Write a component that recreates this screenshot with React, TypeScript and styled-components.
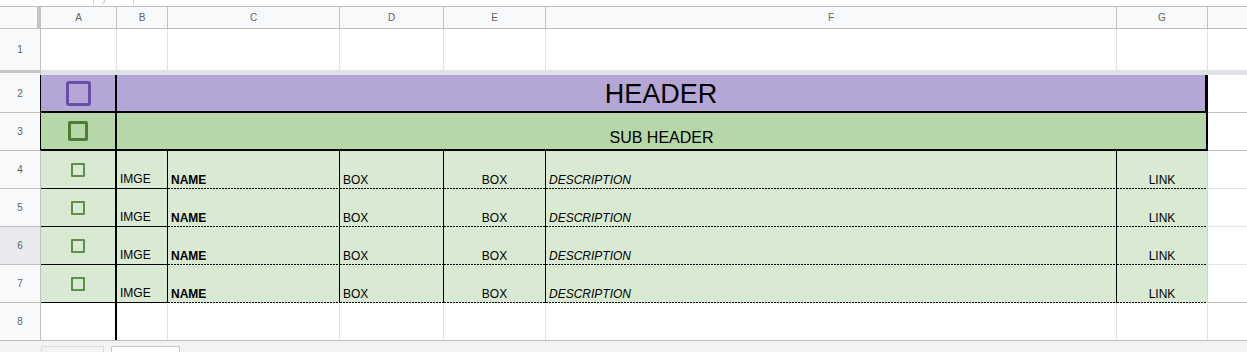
import React from 'react';
import styled, { createGlobalStyle } from 'styled-components';

const GlobalStyle = createGlobalStyle`
  html, body { margin: 0; padding: 0; background: #ffffff; }
  body { font-family: "Liberation Sans", Arial, sans-serif; }
  * { box-sizing: border-box; }
`;

const GRID = '#e2e2e2';
const HEAD_LINE = '#c0c0c0';
const PURPLE = '#b4a7d6';
const GREEN = '#b6d7a8';
const LIGHT_GREEN = '#d9ead3';

const Page = styled.div`
  width: 1247px;
  height: 352px;
  overflow: hidden;
  display: flex;
  flex-direction: column;
  background: #ffffff;
`;

const TopStrip = styled.div`
  height: 6px;
  flex: none;
  display: flex;
  align-items: flex-start;
  padding-left: 93px;
`;

const StripDivider = styled.span<{ $gap?: number }>`
  width: 1px;
  height: 5px;
  background: #d3d5d8;
  margin-left: ${(p) => p.$gap ?? 0}px;
`;

const FxStub = styled.svg`
  margin-left: 8px;
  width: 8px;
  height: 5px;
  flex: none;
`;

const Sheet = styled.div`
  flex: none;
  display: grid;
  grid-template-columns: 41px 76px 51px 172px 104px 102px 571px 91px 1fr;
  grid-template-rows: 23px 41px 5px repeat(6, 38px) 37px;
`;

const ColHead = styled.div<{ $handle?: boolean; $last?: boolean }>`
  background: #f8f9fa;
  border-top: 1px solid ${HEAD_LINE};
  border-bottom: 1px solid ${HEAD_LINE};
  border-right: ${(p) =>
    p.$handle ? '4px solid #c4c4c4' : p.$last ? 'none' : `1px solid ${HEAD_LINE}`};
  display: flex;
  align-items: center;
  justify-content: center;
  font-family: "Liberation Sans", Arial, sans-serif;
  font-size: 10px;
  color: #5f6368;
`;

const RowHead = styled.div<{ $edge?: string; $hl?: boolean; $noBottom?: boolean }>`
  background: ${(p) => (p.$hl ? '#e8eaed' : '#f8f9fa')};
  border-right: 1px solid ${(p) => p.$edge ?? HEAD_LINE};
  border-bottom: ${(p) => (p.$noBottom ? 'none' : `1px solid ${HEAD_LINE}`)};
  display: flex;
  align-items: center;
  justify-content: center;
  font-family: "Liberation Sans", Arial, sans-serif;
  font-size: 10px;
  color: #5f6368;
`;

const BandHead = styled.div`
  border-top: 3px solid #c4c4c4;
  background: #f8f9fa;
  border-right: 1px solid ${HEAD_LINE};
`;

const BandBody = styled.div`
  grid-column: 2 / -1;
  background: #dee1e6;
`;

type CellProps = {
  $bg?: string;
  $r?: string;
  $b?: string;
  $dash?: boolean;
  $justify?: 'flex-start' | 'center' | 'flex-end';
  $middle?: boolean;
  $span?: number;
  $weight?: number;
  $italic?: boolean;
  $size?: number;
  $pb?: number;
};

const Cell = styled.div<CellProps>`
  grid-column: ${(p) => (p.$span ? `span ${p.$span}` : 'auto')};
  background-color: ${(p) => p.$bg ?? '#ffffff'};
  background-image: ${(p) =>
    p.$dash
      ? 'repeating-linear-gradient(to right, #000000 0 2px, transparent 2px 3px)'
      : 'none'};
  background-size: 100% 1px;
  background-position: left bottom;
  background-repeat: no-repeat;
  border-right: ${(p) => p.$r ?? `1px solid ${GRID}`};
  border-bottom: ${(p) => p.$b ?? 'none'};
  display: flex;
  align-items: ${(p) => (p.$middle ? 'center' : 'flex-end')};
  justify-content: ${(p) => p.$justify ?? 'flex-start'};
  padding: 0 3px ${(p) => p.$pb ?? 2}px;
  font-family: "Liberation Sans", Arial, sans-serif;
  font-size: ${(p) => p.$size ?? 12}px;
  font-weight: ${(p) => p.$weight ?? 400};
  font-style: ${(p) => (p.$italic ? 'italic' : 'normal')};
  color: #000000;
  white-space: nowrap;
  overflow: hidden;
`;

const Check = styled.span<{ $size: number; $stroke: number; $color: string; $radius: number }>`
  display: block;
  flex: none;
  width: ${(p) => p.$size}px;
  height: ${(p) => p.$size}px;
  border: ${(p) => p.$stroke}px solid ${(p) => p.$color};
  border-radius: ${(p) => p.$radius}px;
`;

const BottomBar = styled.div`
  flex: 1;
  background: #f1f3f4;
  border-top: 1px solid #bdbdbd;
  display: flex;
  align-items: flex-end;
  gap: 7px;
  padding-left: 41px;
`;

const SheetTab = styled.div<{ $active?: boolean; $w: number }>`
  width: ${(p) => p.$w}px;
  height: 6px;
  background: ${(p) => (p.$active ? '#ffffff' : '#f3f3f3')};
  border: 1px solid ${(p) => (p.$active ? '#c6c6c6' : '#dadce0')};
  border-bottom: none;
  border-radius: 2px 2px 0 0;
`;

const COL_LETTERS = ['A', 'B', 'C', 'D', 'E', 'F', 'G'];

const BLACK2 = '2px solid #000000';
const BLACK1 = '1px solid #000000';

function ItemRow({ n, hl, last }: { n: number; hl?: boolean; last?: boolean }) {
  return (
    <>
      <RowHead $hl={hl}>{n}</RowHead>
      <Cell $bg={LIGHT_GREEN} $r={BLACK2} $b={BLACK1} $middle $justify="center" $pb={0}>
        <Check $size={14} $stroke={2} $color="#5e8f4b" $radius={1} />
      </Cell>
      <Cell $bg={LIGHT_GREEN} $r={BLACK1} $b={BLACK1}>IMGE</Cell>
      <Cell $bg={LIGHT_GREEN} $r={BLACK1} $dash $weight={700}>NAME</Cell>
      <Cell $bg={LIGHT_GREEN} $r={BLACK1} $dash>BOX</Cell>
      <Cell $bg={LIGHT_GREEN} $r={BLACK1} $dash $justify="center">BOX</Cell>
      <Cell $bg={LIGHT_GREEN} $r={BLACK1} $dash $italic>DESCRIPTION</Cell>
      <Cell $bg={LIGHT_GREEN} $r="1px solid #c9d8c2" $dash $justify="center">LINK</Cell>
      <Cell $r="none" $b={`1px solid ${last ? HEAD_LINE : GRID}`} />
    </>
  );
}

export default function App() {
  return (
    <Page>
      <GlobalStyle />
      <TopStrip>
        <StripDivider />
        <FxStub viewBox="0 0 8 5">
          <path d="M2.5 0 L1.8 3.2 Q1.5 4.4 0.4 4.2" fill="none" stroke="#bfc1c4" strokeWidth="0.9" />
        </FxStub>
        <StripDivider $gap={23} />
      </TopStrip>
      <Sheet>
        {/* column headers */}
        <ColHead $handle />
        {COL_LETTERS.map((l) => (
          <ColHead key={l}>{l}</ColHead>
        ))}
        <ColHead $last />

        {/* row 1 */}
        <RowHead $noBottom>1</RowHead>
        {COL_LETTERS.map((l) => (
          <Cell key={`r1${l}`} />
        ))}
        <Cell $r="none" />

        {/* frozen divider */}
        <BandHead />
        <BandBody />

        {/* row 2 header */}
        <RowHead $edge="#000000">2</RowHead>
        <Cell $bg={PURPLE} $r={BLACK2} $b={BLACK2} $middle $justify="center" $pb={0}>
          <Check $size={25} $stroke={3} $color="#674ea7" $radius={3} />
        </Cell>
        <Cell $bg={PURPLE} $span={6} $r="3px solid #000000" $b={BLACK2} $justify="center" $size={27} $pb={1}>
          HEADER
        </Cell>
        <Cell $r="none" $b={`1px solid ${HEAD_LINE}`} />

        {/* row 3 sub header */}
        <RowHead $edge="#000000">3</RowHead>
        <Cell $bg={GREEN} $r={BLACK2} $b={BLACK2} $middle $justify="center" $pb={0}>
          <Check $size={20} $stroke={3} $color="#4b7d37" $radius={2} />
        </Cell>
        <Cell $bg={GREEN} $span={6} $r={BLACK2} $b={BLACK2} $justify="center" $size={16} $pb={2}>
          SUB HEADER
        </Cell>
        <Cell $r="none" $b={`1px solid ${HEAD_LINE}`} />

        <ItemRow n={4} />
        <ItemRow n={5} />
        <ItemRow n={6} hl />
        <ItemRow n={7} last />

        {/* row 8 */}
        <RowHead $noBottom>8</RowHead>
        <Cell $r={BLACK2} />
        {COL_LETTERS.slice(1).map((l) => (
          <Cell key={`r8${l}`} />
        ))}
        <Cell $r="none" />
      </Sheet>
      <BottomBar>
        <SheetTab $w={63} />
        <SheetTab $w={69} $active />
      </BottomBar>
    </Page>
  );
}
